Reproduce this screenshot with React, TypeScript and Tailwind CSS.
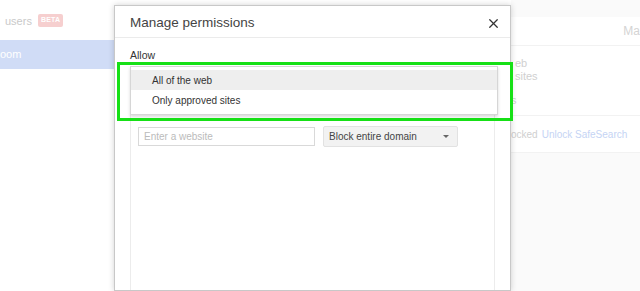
import { X } from 'lucide-react';

const font = { fontFamily: '"Liberation Sans", Arial, sans-serif' };

function Sidebar() {
    return (
        <div className="w-[114px] shrink-0 flex flex-col">
            <div className="h-[40px] flex items-center gap-[6px] pt-[1px] text-[11px] text-[#c9c9c9]">
                <span className="pl-[5px] pt-[2px]">users</span>
                <span className="bg-[#f6cfcf] text-white text-[7px] font-bold px-[3px] h-[13px] flex items-center rounded-[2px] tracking-wide">BETA</span>
            </div>
            <div className="h-[29px] bg-[#d0dcf6] flex items-center text-[11px] text-white">oom</div>
        </div>
    );
}

function RightPane() {
    return (
        <div className="flex-1 flex flex-col bg-[#fafafa]">
            <div className="h-[17px]" />
            <div className="bg-white flex flex-col">
                <div className="h-[29px] flex items-center justify-end text-[12px] text-[#d4d4d4] border-b border-[#f2f2f2]">Ma</div>
                <div className="h-[70px] pt-[11px] pl-[4px] text-[11px] text-[#d0d0d0] leading-[13px] border-b border-[#f2f2f2]">
                    <div>eb</div>
                    <div>sites</div>
                    <div className="mt-[11px] -ml-[4px]">s</div>
                </div>
                <div className="h-[37px] flex items-center gap-[4px] text-[10px] border-b border-[#f2f2f2]">
                    <span className="text-[#cfcfcf]">ocked</span>
                    <span className="text-[#c5d4f4]">Unlock SafeSearch</span>
                </div>
            </div>
        </div>
    );
}

function Modal() {
    return (
        <div className="relative z-10 w-[397px] shrink-0 mt-[5px] bg-white border border-[#c8c8c8] shadow-[0_0_6px_rgba(0,0,0,0.18)] flex flex-col">
            <div className="h-[32px] pt-[4px] flex items-center justify-between pl-[15px] pr-[9px] border-b border-[#ebebeb]">
                <span className="text-[13.5px] text-[#444]">Manage permissions</span>
                <X size={15} strokeWidth={2} className="text-[#333]" />
            </div>
            <div className="px-[15px] pt-[10px] flex-1 flex flex-col">
                <div className="text-[10.5px] text-[#333] h-[18px]">Allow</div>
                <div className="relative h-[49px]">
                    <div className="absolute -left-[13px] -right-[18px] -top-[4px] h-[59px] border-[3px] border-[#16e016] z-10" />
                    <div className="absolute left-0 right-[-3px] top-0 h-[49px] bg-white border border-[#d6d6d6] shadow-[0_2px_3px_rgba(0,0,0,0.15)] py-[3px] text-[10px] text-[#333] z-0">
                        <div className="h-[20px] bg-[#eeeeee] flex items-center pl-[21px]">All of the web</div>
                        <div className="h-[20px] flex items-center pl-[21px]">Only approved sites</div>
                    </div>
                </div>
                <div className="flex-1 border-x border-[#ececec] px-[7px] pt-[11px]">
                    <div className="flex items-center gap-[8px]">
                        <div className="w-[177px] h-[19px] border border-[#d9d9d9] flex items-center pl-[5px] text-[10px] text-[#bbb]">Enter a website</div>
                        <div className="w-[135px] h-[21px] bg-[#f2f2f2] border border-[#e2e2e2] rounded-[2px] flex items-center justify-between pl-[5px] pr-[8px] text-[10px] text-[#444]">
                            <span>Block entire domain</span>
                            <svg width="6" height="3" viewBox="0 0 6 3"><path d="M0 0h6L3 3z" fill="#666" /></svg>
                        </div>
                    </div>
                </div>
            </div>
        </div>
    );
}

export default function App() {
    return (
        <div className="w-[640px] h-[291px] overflow-hidden bg-white flex" style={font}>
            <Sidebar />
            <Modal />
            <RightPane />
        </div>
    );
}
